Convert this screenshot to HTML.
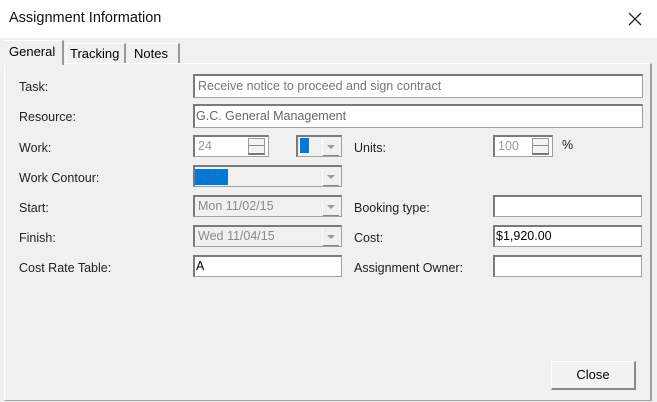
<!DOCTYPE html>
<html><head><style>
body{margin:0;width:657px;height:402px;background:#f0f0f0;font-family:"Liberation Sans",sans-serif;font-size:12.5px;color:#000;position:relative;overflow:hidden}
.a{position:absolute}
.title{left:0;top:0;width:657px;height:38px;background:#fff}
.lbl{position:absolute;font-size:12.5px;color:#222}
.box{position:absolute;height:22px;border:1px solid #a0a0a0;border-top:2px solid #7a7a7a;border-left:2px solid #7a7a7a;background:#fff;box-sizing:border-box;font-size:12.5px;line-height:19px;padding-left:3px;white-space:nowrap;overflow:hidden}
.dis{background:#f0f0f0;color:#8a8a8a}
.arr{position:absolute;right:2px;top:2px;width:16px;height:16px;border-left:1px solid #fff;border-bottom:2px solid #888}
.arr:after{content:"";position:absolute;left:4px;top:6px;border-left:4px solid transparent;border-right:4px solid transparent;border-top:4px solid #999}
.spin{position:absolute;right:3px;top:1px;width:17px;height:17px;border:1px solid #999;border-bottom:2px solid #777;box-sizing:border-box;background:#f4f4f4}
.spin:before{content:"";position:absolute;left:0;right:0;top:6px;border-top:1px solid #888}
.sel{background:#0078d7;color:#3a6fb0}
</style></head><body>
<div class="a title"></div>
<div class="a" style="left:9px;top:10px;font-size:14.5px;color:#111">Assignment Information</div>
<svg class="a" style="left:628px;top:12px" width="14" height="14"><path d="M1 1L13 13M13 1L1 13" stroke="#222" stroke-width="1.3"/></svg>
<div class="a" style="left:4px;top:63px;width:648px;height:338px;border-top:1px solid #fff;border-left:1px solid #fff;border-right:2px solid #a0a0a0;border-bottom:1px solid #a0a0a0;box-sizing:border-box"></div>
<div class="a" style="left:4px;top:40px;width:60px;height:25px;background:#f0f0f0;border-top:1px solid #fff;border-right:2px solid #999;box-sizing:border-box"></div>
<div class="a" style="left:9px;top:44px;font-size:13px">General</div>
<div class="a" style="left:66px;top:43px;width:60px;height:20px;border-top:1px solid #fff;border-left:1px solid #fff;border-right:2px solid #999;box-sizing:border-box"></div>
<div class="a" style="left:70px;top:46px;font-size:13px">Tracking</div>
<div class="a" style="left:128px;top:43px;width:52px;height:20px;border-top:1px solid #fff;border-right:2px solid #999;box-sizing:border-box"></div>
<div class="a" style="left:134px;top:46px;font-size:13px">Notes</div>

<div class="lbl" style="left:19px;top:80px">Task:</div>
<div class="lbl" style="left:19px;top:110px">Resource:</div>
<div class="lbl" style="left:19px;top:141px">Work:</div>
<div class="lbl" style="left:19px;top:171px">Work Contour:</div>
<div class="lbl" style="left:19px;top:201px">Start:</div>
<div class="lbl" style="left:19px;top:231px">Finish:</div>
<div class="lbl" style="left:19px;top:261px">Cost Rate Table:</div>
<div class="lbl" style="left:354px;top:141px">Units:</div>
<div class="lbl" style="left:354px;top:201px">Booking type:</div>
<div class="lbl" style="left:354px;top:231px">Cost:</div>
<div class="lbl" style="left:354px;top:261px">Assignment Owner:</div>
<div class="lbl" style="left:562px;top:138px">%</div>

<div class="box" style="left:193px;top:74px;width:450px;height:24px;line-height:21px;color:#777">Receive notice to proceed and sign contract</div>
<div class="box" style="left:193px;top:104px;width:450px;height:24px;line-height:21px;color:#666;padding-left:1px">G.C. General Management</div>
<div class="box" style="left:193px;top:135px;width:76px;color:#999">24<div class="spin"></div></div>
<div class="box dis" style="left:296px;top:135px;width:46px;padding-left:2px"><span class="sel" style="display:inline-block;width:9px;height:15px;margin-top:1px"></span><div class="arr"></div></div>
<div class="box" style="left:493px;top:135px;width:60px;color:#999">100<div class="spin"></div></div>
<div class="box dis" style="left:193px;top:165px;width:149px;padding-left:0"><span class="sel" style="display:inline-block;width:33px;height:16px;line-height:16px;font-size:11px">FLAT</span><div class="arr"></div></div>
<div class="box dis" style="left:193px;top:195px;width:149px">Mon 11/02/15<div class="arr"></div></div>
<div class="box dis" style="left:193px;top:225px;width:149px">Wed 11/04/15<div class="arr"></div></div>
<div class="box" style="left:193px;top:255px;width:149px;padding-left:1px">A</div>
<div class="box" style="left:493px;top:195px;width:149px"></div>
<div class="box" style="left:493px;top:225px;width:149px;padding-left:1px">$1,920.00</div>
<div class="box" style="left:493px;top:255px;width:149px"></div>

<div class="a" style="left:551px;top:361px;width:85px;height:29px;background:#f2f2f2;border:1px solid #fff;border-right:2px solid #888;border-bottom:2px solid #888;box-sizing:border-box;text-align:center;line-height:26px;font-size:13px">Close</div>
</body></html>
